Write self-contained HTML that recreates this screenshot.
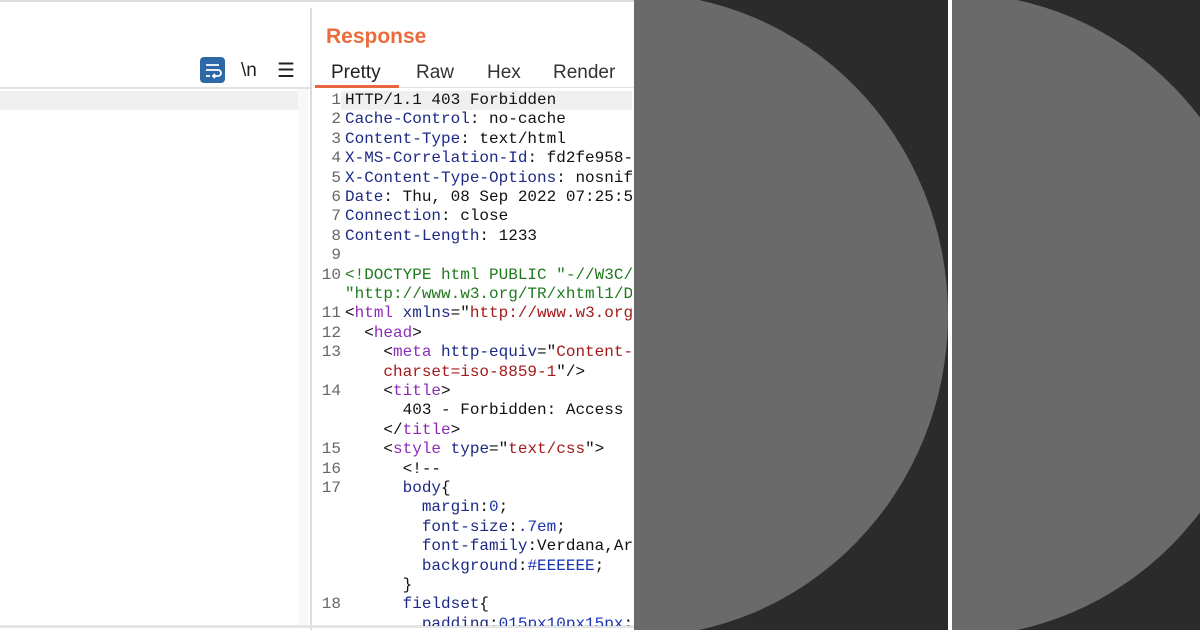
<!DOCTYPE html>
<html><head><meta charset="utf-8"><style>
*{margin:0;padding:0;box-sizing:border-box}
body{width:1200px;height:630px;overflow:hidden;background:#fff;position:relative;font-family:"Liberation Sans",sans-serif}
.abs{position:absolute}
.code{position:absolute;left:312px;top:91px;width:320px;height:535px;overflow:hidden;font-family:"Liberation Mono",monospace;font-size:16px;line-height:19.4px;color:#111}
.ln{position:absolute;left:0;width:29px;text-align:right;color:#666}
.tx{position:absolute;left:33px;white-space:pre}
.k{color:#1c2a86}.g{color:#1e7a1e}.p{color:#8d2bb8}.r{color:#a31a1a}.b{color:#1a33b0}
</style></head><body>
<div class="abs" style="left:0;top:0;width:634px;height:2px;background:#ddd"></div>
<div class="abs" style="left:0;top:87px;width:311px;height:2px;background:#e2e2e2"></div>
<div class="abs" style="left:0;top:91px;width:298px;height:19px;background:#efefef"></div>
<div class="abs" style="left:298px;top:89px;width:10px;height:537px;background:#f8f8f8"></div>
<div class="abs" style="left:310px;top:8px;width:2px;height:622px;background:#dcdcdc"></div>
<div class="abs" style="left:0;top:625px;width:634px;height:3px;background:#e4e4e4"></div>
<div class="abs" style="left:200px;top:57px;width:25px;height:26px;background:#2d69a6;border-radius:4px">
<svg width="25" height="26" viewBox="0 0 25 26"><path d="M6 8h13M6 13h12a3 3 0 0 1 0 6h-4M15 17l-2 2 2 2M6 19h4" stroke="#fff" stroke-width="1.8" fill="none"/></svg></div>
<div class="abs" style="left:241px;top:60px;font-size:19px;color:#222">\n</div>
<div class="abs" style="left:277px;top:58px;font-size:20px;color:#222">☰</div>
<div class="abs" style="left:326px;top:25px;font-size:21px;font-weight:bold;color:#ec6b3b">Response</div>
<div class="abs" style="left:331px;top:62px;font-size:19px;color:#222">Pretty</div>
<div class="abs" style="left:416px;top:62px;font-size:19px;color:#333">Raw</div>
<div class="abs" style="left:487px;top:62px;font-size:19px;color:#333">Hex</div>
<div class="abs" style="left:553px;top:62px;font-size:19px;color:#333">Render</div>
<div class="abs" style="left:315px;top:85px;width:84px;height:3px;background:#e8663d"></div>
<div class="abs" style="left:399px;top:87px;width:235px;height:1px;background:#e2e2e2"></div>
<div class="code">
<div class="abs" style="left:29px;top:0;width:300px;height:19px;background:#efefef"></div>
<div class="ln" style="top:0">1</div><div class="tx" style="top:0">HTTP/1.1 403 Forbidden</div>
<div class="ln" style="top:19.4px">2</div><div class="tx" style="top:19.4px"><span class="k">Cache-Control</span>: no-cache</div>
<div class="ln" style="top:38.8px">3</div><div class="tx" style="top:38.8px"><span class="k">Content-Type</span>: text/html</div>
<div class="ln" style="top:58.2px">4</div><div class="tx" style="top:58.2px"><span class="k">X-MS-Correlation-Id</span>: fd2fe958-</div>
<div class="ln" style="top:77.6px">5</div><div class="tx" style="top:77.6px"><span class="k">X-Content-Type-Options</span>: nosniff</div>
<div class="ln" style="top:97px">6</div><div class="tx" style="top:97px"><span class="k">Date</span>: Thu, 08 Sep 2022 07:25:5</div>
<div class="ln" style="top:116.4px">7</div><div class="tx" style="top:116.4px"><span class="k">Connection</span>: close</div>
<div class="ln" style="top:135.8px">8</div><div class="tx" style="top:135.8px"><span class="k">Content-Length</span>: 1233</div>
<div class="ln" style="top:155.2px">9</div>
<div class="ln" style="top:174.6px">10</div><div class="tx g" style="top:174.6px">&lt;!DOCTYPE html PUBLIC "-//W3C/</div>
<div class="tx g" style="top:194px">"http://www.w3.org/TR/xhtml1/D</div>
<div class="ln" style="top:213.4px">11</div><div class="tx" style="top:213.4px">&lt;<span class="p">html</span> <span class="k">xmlns</span>="<span class="r">http://www.w3.org</span></div>
<div class="ln" style="top:232.8px">12</div><div class="tx" style="top:232.8px">  &lt;<span class="p">head</span>&gt;</div>
<div class="ln" style="top:252.2px">13</div><div class="tx" style="top:252.2px">    &lt;<span class="p">meta</span> <span class="k">http-equiv</span>="<span class="r">Content-</span></div>
<div class="tx" style="top:271.6px">    <span class="r">charset=iso-8859-1</span>"/&gt;</div>
<div class="ln" style="top:291px">14</div><div class="tx" style="top:291px">    &lt;<span class="p">title</span>&gt;</div>
<div class="tx" style="top:310.4px">      403 - Forbidden: Access</div>
<div class="tx" style="top:329.8px">    &lt;/<span class="p">title</span>&gt;</div>
<div class="ln" style="top:349.2px">15</div><div class="tx" style="top:349.2px">    &lt;<span class="p">style</span> <span class="k">type</span>="<span class="r">text/css</span>"&gt;</div>
<div class="ln" style="top:368.6px">16</div><div class="tx" style="top:368.6px">      &lt;!--</div>
<div class="ln" style="top:388px">17</div><div class="tx" style="top:388px">      <span class="k">body</span>{</div>
<div class="tx" style="top:407.4px">        <span class="k">margin</span>:<span class="b">0</span>;</div>
<div class="tx" style="top:426.8px">        <span class="k">font-size</span>:<span class="b">.7em</span>;</div>
<div class="tx" style="top:446.2px">        <span class="k">font-family</span>:Verdana,Arial</div>
<div class="tx" style="top:465.6px">        <span class="k">background</span>:<span class="b">#EEEEEE</span>;</div>
<div class="tx" style="top:485px">      }</div>
<div class="ln" style="top:504.4px">18</div><div class="tx" style="top:504.4px">      <span class="k">fieldset</span>{</div>
<div class="tx" style="top:523.8px">        <span class="k">padding</span>:<span class="b">015px10px15px</span>;</div>
</div>
<div class="abs" style="left:634px;top:0;width:314px;height:630px;background:#2b2b2b;overflow:hidden">
<svg width="314" height="630"><ellipse cx="0" cy="315" rx="314" ry="322" fill="#6a6a6a"/></svg>
</div>
<div class="abs" style="left:948px;top:0;width:4px;height:630px;background:#fff"></div>
<div class="abs" style="left:952px;top:0;width:248px;height:630px;background:#2b2b2b;overflow:hidden">
<svg width="248" height="630"><ellipse cx="0" cy="315" rx="314" ry="322" fill="#6a6a6a"/></svg>
</div>
</body></html>
